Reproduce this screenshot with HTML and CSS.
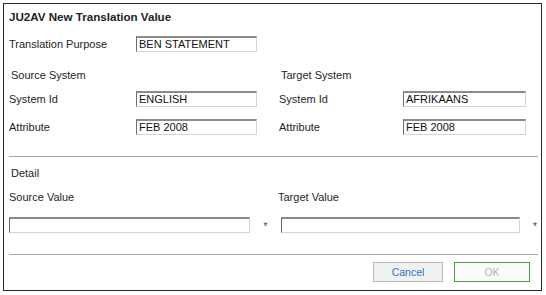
FILE: index.html
```html
<!DOCTYPE html>
<html>
    <head>
        <title>JU2AV New Translation Value</title>
        <link rel="stylesheet" href="styles.css">
    </head>
    <body>
        <div class="dialog">
            <div class="title">JU2AV New Translation Value</div>

            <div class="grid row first-row">
                <div class="label">Translation Purpose</div>
                <div class="field">BEN STATEMENT</div>
            </div>

            <div class="grid heading">
                <div class="label span2">Source System</div>
                <div></div>
                <div class="label span2">Target System</div>
            </div>

            <div class="grid row">
                <div class="label">System Id</div>
                <div class="field">ENGLISH</div>
                <div></div>
                <div class="label">System Id</div>
                <div class="field">AFRIKAANS</div>
            </div>

            <div class="grid row">
                <div class="label">Attribute</div>
                <div class="field">FEB 2008</div>
                <div></div>
                <div class="label">Attribute</div>
                <div class="field">FEB 2008</div>
            </div>

            <div class="separator first"></div>

            <div class="detail-title">Detail</div>

            <div class="value-labels">
                <div class="source-label">Source Value</div>
                <div>Target Value</div>
            </div>

            <div class="value-inputs">
                <div class="field source-input"></div>
                <div class="star">*</div>
                <div class="field target-input"></div>
                <div class="star last">*</div>
            </div>

            <div class="separator"></div>

            <div class="buttons">
                <button class="btn cancel">Cancel</button>
                <button class="btn ok">OK</button>
            </div>
        </div>
    </body>
</html>
```

FILE: styles.css
```css
body{
    margin: 0;
    background: #ffffff;
    font-family: "Liberation Sans", Arial, sans-serif;
    font-size: 11px;
    color: #1e1e1e;
}
.dialog{
    margin: 3px 0 0 3px;
    width: 537px;
    height: 286px;
    border: 1px solid #2a2a2a;
    display: flex;
    flex-direction: column;
}
.title{
    height: 26px;
    line-height: 26px;
    padding-left: 5px;
    font-weight: bold;
    font-size: 11.6px;
    color: #222;
}
.grid{
    display: grid;
    grid-template-columns: 127px 121px 22px 124px 123px;
    padding-left: 5px;
    align-items: center;
}
.row{
    height: 28px;
}
.first-row{
    height: 27px;
}
.heading{
    height: 28px;
    box-sizing: border-box;
    padding-top: 8px;
    line-height: 20px;
    align-items: start;
}
.heading .label{
    padding-left: 2px;
}
.span2{
    grid-column: span 2;
}
.heading .span2:last-child{
    grid-column: 4 / span 2;
}
.field{
    height: 16px;
    box-sizing: border-box;
    border: 1px solid #d4d4d4;
    border-top: 2px solid #8a8a8a;
    border-left: 1px solid #6e6e6e;
    line-height: 13px;
    padding-left: 2px;
    color: #111;
    background: #fff;
    flex-shrink: 0;
}
/* lines between sections */
.separator{
    height: 1px;
    background: #a8a8a8;
    margin: 11px 3px 0 5px;
}
.separator.first{
    margin-top: 15px;
}
.detail-title{
    margin-top: 2px;
    height: 28px;
    line-height: 28px;
    padding-left: 7px;
}
.value-labels{
    display: flex;
    height: 20px;
    line-height: 20px;
    padding-left: 5px;
}
.source-label{
    width: 269px;
}
.value-inputs{
    display: flex;
    height: 36px;
    align-items: center;
    padding-left: 5px;
}
.source-input{
    width: 241px;
}
.target-input{
    width: 239px;
}
.star{
    width: 31px;
    flex-shrink: 0;
    text-align: center;
    font-size: 10px;
    color: #444;
    padding-top: 3px;
}
.star.last{
    width: 17px;
    text-align: right;
}
.buttons{
    display: flex;
    justify-content: flex-end;
    gap: 11px;
    margin-top: 7px;
    padding-right: 11px;
}
.btn{
    height: 20px;
    font-family: "Liberation Sans", Arial, sans-serif;
    font-size: 10.5px;
    padding: 0;
}
.cancel{
    width: 70px;
    background: #f1f1f1;
    border: 1px solid #b9b9b9;
    color: #2b74c2;
}
.ok{
    width: 76px;
    background: #fcfcfc;
    border: 1px solid #3f9e3f;
    color: #b3b3b3;
}
```
